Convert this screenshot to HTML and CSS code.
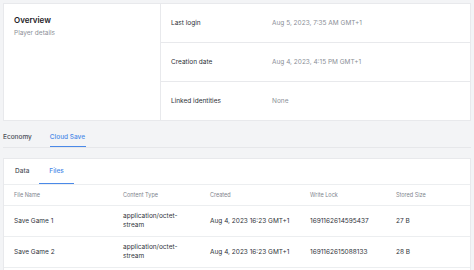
FILE: index.html
```html
<!DOCTYPE html>
<html>
<head>
<meta charset="utf-8">
<link rel="stylesheet" href="styles.css">
</head>
<body>
<div class="page">
  <section class="card overview">
    <div class="ov-head">
      <div class="ov-title">Overview</div>
      <div class="ov-sub">Player details</div>
    </div>
    <div class="ov-rows">
      <div class="ov-row"><span class="lbl">Last login</span><span class="val">Aug 5, 2023, 7:35 AM GMT+1</span></div>
      <div class="ov-row"><span class="lbl">Creation date</span><span class="val">Aug 4, 2023, 4:15 PM GMT+1</span></div>
      <div class="ov-row"><span class="lbl">Linked identities</span><span class="val">None</span></div>
    </div>
  </section>

  <nav class="tabs outer">
    <span class="tab">Economy</span>
    <span class="tab active">Cloud Save</span>
  </nav>

  <section class="card files">
    <nav class="tabs inner">
      <span class="tab">Data</span>
      <span class="tab active">Files</span>
    </nav>
    <div class="table">
      <div class="tr th">
        <span>File Name</span><span>Content Type</span><span>Created</span><span>Write Lock</span><span>Stored Size</span>
      </div>
      <div class="tr">
        <span>Save Game 1</span><span>application/octet-<br>stream</span><span>Aug 4, 2023 16:23 GMT+1</span><span>1691162614595437</span><span>27 B</span>
      </div>
      <div class="tr">
        <span>Save Game 2</span><span>application/octet-<br>stream</span><span>Aug 4, 2023 16:23 GMT+1</span><span>1691162615088133</span><span>28 B</span>
      </div>
    </div>
  </section>
</div>
</body>
</html>
```
FILE: styles.css
```css
html, body {
  margin: 0;
  padding: 0;
  background: #f3f4f6;
  font-family: Inter, "Noto Sans", sans-serif;
  color: #1f2937;
  overflow: hidden;
}
.page {
  width: 468px;
  padding: 3px 0 0 3px;
}
.card {
  background: #fff;
  border: 1px solid #e8e9ec;
}
.overview {
  display: flex;
  height: 116px;
}
.ov-head {
  width: 146px;
  padding: 11px 0 0 10px;
  border-right: 1px solid #e8e9ec;
}
.ov-title {
  font-size: 8px;
  font-weight: 600;
  line-height: 10px;
  color: #1d2127;
}
.ov-sub {
  font-size: 6.5px;
  color: #8b8f97;
  margin-top: 4px;
}
.ov-rows {
  flex: 1;
  display: flex;
  flex-direction: column;
}
.ov-row {
  flex: 1;
  display: flex;
  align-items: center;
  padding-left: 10px;
  font-size: 6.5px;
  border-bottom: 1px solid #e8e9ec;
}
.ov-row:last-child { border-bottom: none; }
.lbl { width: 101px; color: #2b2f36; }
.val { color: #8b8f97; }

.tabs {
  display: flex;
  font-size: 6.5px;
  font-weight: 500;
}
.tab {
  color: #4b5058;
  border-bottom: 1.5px solid transparent;
  box-sizing: border-box;
}
.tab.active {
  color: #4a89e8;
  border-bottom-color: #4a89e8;
}
.outer {
  height: 27px;
  border-bottom: 1px solid #e6e7ea;
  box-sizing: border-box;
  align-items: stretch;
}
.outer .tab {
  display: flex;
  align-items: center;
  padding-top: 6px;
}
.outer .tab:first-child { margin-right: 18px; }
.outer .tab.active { padding: 6px 1px 0 0; }
.files {
  margin-top: 10px;
  height: 120px;
}
.inner {
  height: 26px;
  align-items: stretch;
  padding-left: 1px;
  border-bottom: 1px solid #eceef0;
  box-sizing: border-box;
}
.inner .tab {
  display: flex;
  align-items: center;
  padding: 0 10px;
}
.inner .tab:first-child { padding-left: 10px; padding-right: 10px; }
.table { font-size: 6.5px; }
.tr {
  display: grid;
  grid-template-columns: 109px 87px 100px 86px 1fr;
  padding-left: 10px;
  align-items: center;
  border-bottom: 1px solid #eceef0;
  height: 31px;
  box-sizing: border-box;
  line-height: 9px;
}
.tr.th {
  height: 21px;
  font-size: 5.5px;
}
.tr span { color: #2f333a; }
.tr.th span { color: #80858d; }
```
